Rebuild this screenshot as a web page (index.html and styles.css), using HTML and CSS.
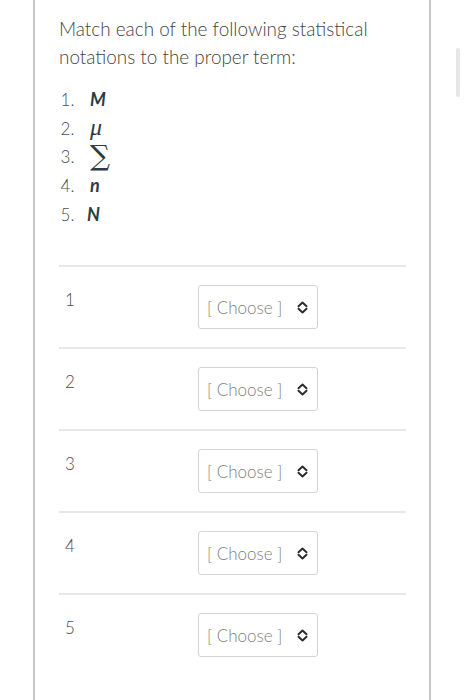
FILE: index.html
```html
<!DOCTYPE html>
<html lang="en">
<head>
<meta charset="utf-8">
<title>Matching question</title>
<link rel="stylesheet" href="styles.css">
</head>
<body>
<div class="card">
  <p class="prompt">Match each of the following statistical notations to the proper term:</p>
  <ol class="notations">
    <li><span class="sym sym-bold">M</span></li>
    <li><span class="sym sym-mu">μ</span></li>
    <li><span class="sym sym-sum">∑</span></li>
    <li><span class="sym sym-bold">n</span></li>
    <li><span class="sym sym-bold sym-upright">N</span></li>
  </ol>
  <div class="answers">
    <div class="row"><span class="num">1</span><div class="select"><span class="select-text">[ Choose ]</span><svg class="chev" width="11" height="13" viewBox="0 0 11 13"><path d="M1.5 5.2 L5.5 1.5 L9.5 5.2 M1.5 7.8 L5.5 11.5 L9.5 7.8" fill="none" stroke="#2d2d2d" stroke-width="2" stroke-linecap="round" stroke-linejoin="round"/></svg></div></div>
    <div class="row"><span class="num">2</span><div class="select"><span class="select-text">[ Choose ]</span><svg class="chev" width="11" height="13" viewBox="0 0 11 13"><path d="M1.5 5.2 L5.5 1.5 L9.5 5.2 M1.5 7.8 L5.5 11.5 L9.5 7.8" fill="none" stroke="#2d2d2d" stroke-width="2" stroke-linecap="round" stroke-linejoin="round"/></svg></div></div>
    <div class="row"><span class="num">3</span><div class="select"><span class="select-text">[ Choose ]</span><svg class="chev" width="11" height="13" viewBox="0 0 11 13"><path d="M1.5 5.2 L5.5 1.5 L9.5 5.2 M1.5 7.8 L5.5 11.5 L9.5 7.8" fill="none" stroke="#2d2d2d" stroke-width="2" stroke-linecap="round" stroke-linejoin="round"/></svg></div></div>
    <div class="row"><span class="num">4</span><div class="select"><span class="select-text">[ Choose ]</span><svg class="chev" width="11" height="13" viewBox="0 0 11 13"><path d="M1.5 5.2 L5.5 1.5 L9.5 5.2 M1.5 7.8 L5.5 11.5 L9.5 7.8" fill="none" stroke="#2d2d2d" stroke-width="2" stroke-linecap="round" stroke-linejoin="round"/></svg></div></div>
    <div class="row"><span class="num">5</span><div class="select"><span class="select-text">[ Choose ]</span><svg class="chev" width="11" height="13" viewBox="0 0 11 13"><path d="M1.5 5.2 L5.5 1.5 L9.5 5.2 M1.5 7.8 L5.5 11.5 L9.5 7.8" fill="none" stroke="#2d2d2d" stroke-width="2" stroke-linecap="round" stroke-linejoin="round"/></svg></div></div>
  </div>
</div>
<div class="scroll-thumb"></div>
</body>
</html>
```

FILE: styles.css
```css
html, body {
  margin: 0;
  padding: 0;
  background: #ffffff;
}

body {
  font-family: Lato, "Open Sans", "Liberation Sans", sans-serif;
  font-weight: 300;
  color: #555555;
  height: 700px;
  overflow: hidden;
}

.card {
  margin-left: 33px;
  border-left: 2px solid #c8c8c8;
  border-right: 2px solid #c8c8c8;
  padding: 15px 23px 60px 24px;
  box-sizing: content-box;
  width: 347px;
  min-height: 700px;
}

.prompt {
  margin: 0;
  font-size: 18.9px;
  line-height: 28px;
  color: #444444;
}

.notations {
  margin: 15px 0 0 0;
  padding: 0 0 0 20px;
  font-size: 17px;
  line-height: 28.7px;
  color: #4d4d4d;
}

.notations li {
  padding-left: 11px;
  height: 28.7px;
}

.sym {
  color: #2d3b45;
  line-height: 16px;
}

.sym-bold {
  font-weight: 700;
  font-style: italic;
  font-size: 18px;
}

.sym-upright {
  margin-left: -3px;
}

.sym-mu {
  font-family: "Liberation Serif", "DejaVu Serif", serif;
  font-style: italic;
  font-size: 24px;
  font-weight: 400;
}

.sym-sum {
  font-family: "DejaVu Serif", "Liberation Serif", serif;
  font-size: 28px;
  font-weight: 400;
  vertical-align: -2px;
}

.answers {
  margin-top: 36px;
}

.row {
  display: flex;
  align-items: flex-start;
  border-top: 2px solid #e8e8e8;
  padding-top: 18px;
  box-sizing: content-box;
  height: 62px;
}

.num {
  width: 139px;
  padding-left: 6px;
  box-sizing: border-box;
  font-size: 17px;
  line-height: 18px;
  margin-top: 6px;
  color: #4d4d4d;
}

.select {
  display: flex;
  align-items: center;
  justify-content: space-between;
  width: 120px;
  height: 44px;
  box-sizing: border-box;
  border: 1px solid #d4d4d4;
  border-radius: 3px;
  padding: 0 9px 0 8px;
}

.select-text {
  font-size: 17px;
  color: #808080;
}

.chev {
  display: block;
}

.scroll-thumb {
  position: fixed;
  left: 456px;
  top: 48px;
  width: 4px;
  height: 49px;
  background: #e6e6e6;
  border-radius: 2px;
}
```
